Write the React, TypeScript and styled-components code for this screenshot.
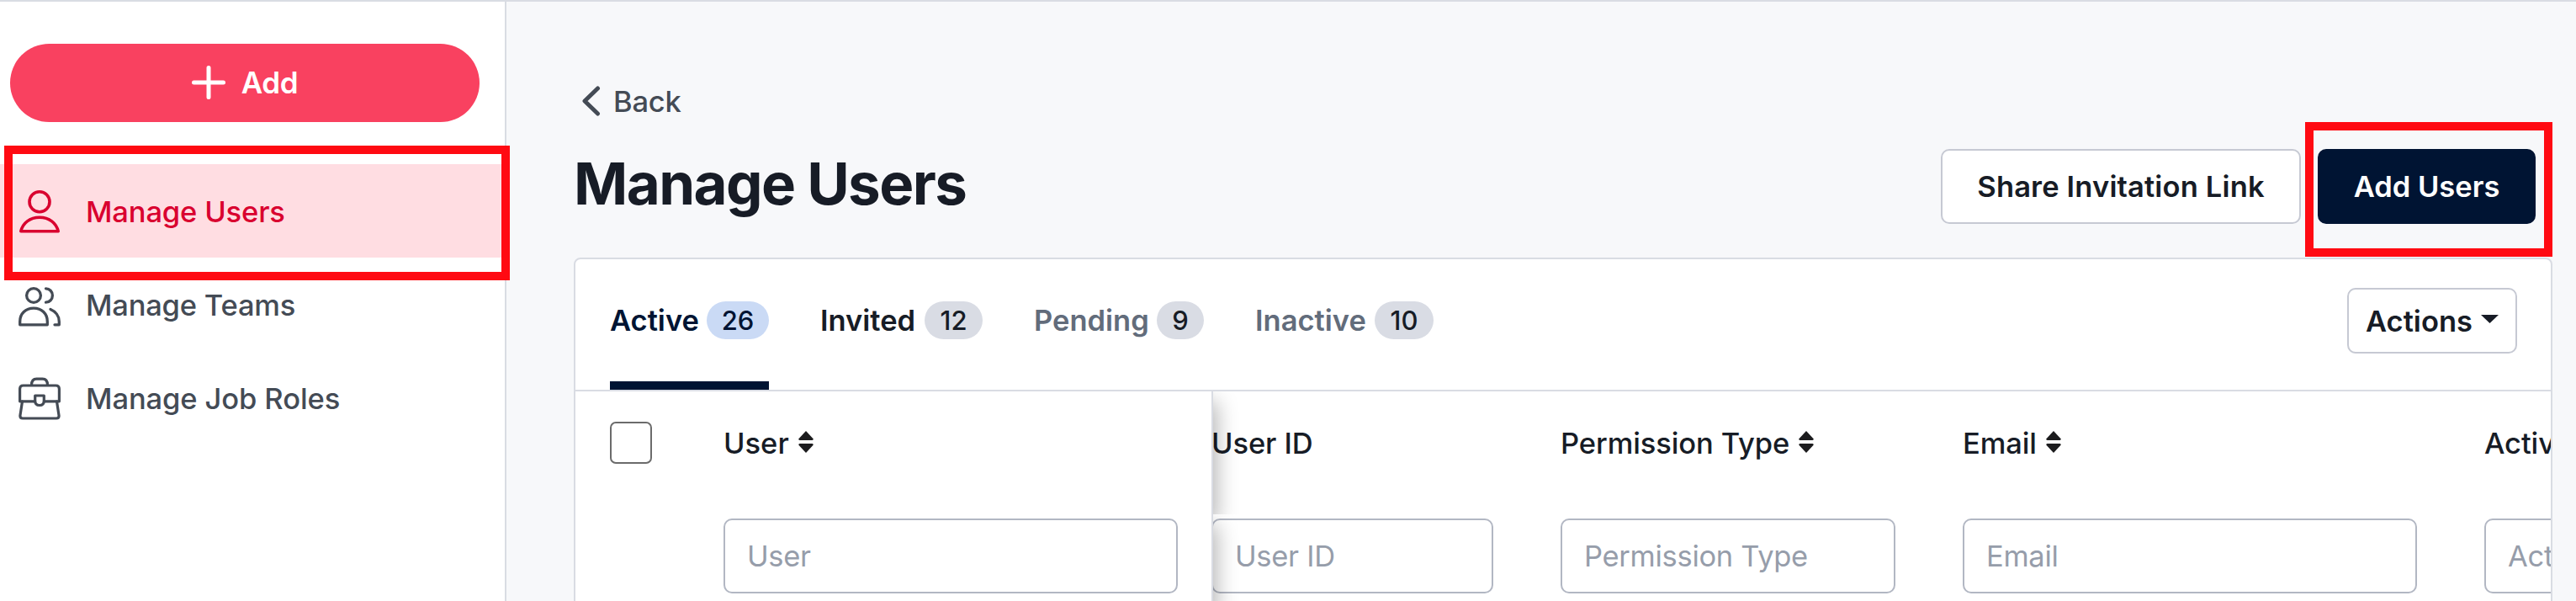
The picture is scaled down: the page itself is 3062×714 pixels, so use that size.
import React from "react";
import styled, { createGlobalStyle, css } from "styled-components";

const Global = createGlobalStyle`
  * { box-sizing: border-box; }
  html, body { margin: 0; padding: 0; }
  body {
    width: 3062px; height: 714px; overflow: hidden; background: #f7f8fa;
    font-family: Inter, "Liberation Sans", sans-serif; color: #171c26;
  }
  button, input { font: inherit; }
`;

const Label = styled.span<{ $ls?: number }>`
  white-space: nowrap;
  letter-spacing: ${(p) => p.$ls ?? 0}px;
`;

const Shell = styled.div`
  display: flex; width: 3062px; height: 714px; overflow: hidden;
  border-top: 2px solid #d9dce3; position: relative;
`;
const Sidebar = styled.aside`
  width: 602px; flex: none; background: #fff; border-right: 2px solid #d9dce3;
  padding-top: 50px;
`;
const AddButton = styled.button`
  display: flex; align-items: center; justify-content: center; gap: 19px;
  width: 558px; height: 93px; margin: 0 0 50px 12px; padding: 0 0 2px 0;
  border: 0; border-radius: 47px; background: #f94160; color: #fff;
  font-size: 35px; font-weight: 600;
`;
const NavItem = styled.a<{ $active?: boolean }>`
  display: flex; align-items: center; gap: 28px; height: 111px; padding-left: 20px;
  font-size: 34.5px; font-weight: 550; color: #444b55;
  ${(p) => p.$active && css`background: #ffdde2; color: #d9002f;`}
  svg { flex: none; }
  span { padding-top: 1px; }
`;
const Highlight = styled.div<{ $x: number; $y: number; $w: number; $h: number }>`
  position: absolute; left: ${(p) => p.$x}px; top: ${(p) => p.$y}px;
  width: ${(p) => p.$w}px; height: ${(p) => p.$h}px;
  border: 10px solid #ff0a12; z-index: 5;
`;
const Main = styled.main`
  flex: none; width: 2460px; padding: 93px 28px 0 80px;
`;
const Back = styled.a`
  display: flex; align-items: center; gap: 15px; height: 50px; padding-left: 9px;
  font-size: 34.5px; font-weight: 550; color: #444b55;
`;
const TitleRow = styled.header`
  display: flex; align-items: flex-start; justify-content: space-between;
  height: 161px; padding: 32px 20px 0 0;
`;
const Title = styled.h1`
  margin: -3px 0 0 0; font-size: 69px; line-height: 89px; font-weight: 700;
`;
const Buttons = styled.div`display: flex; gap: 20px;`;
const Button = styled.button<{ $dark?: boolean; $w: number }>`
  width: ${(p) => p.$w}px; height: 89px; padding: 0; border-radius: 10px;
  border: 2px solid ${(p) => (p.$dark ? "#001433" : "#c6c9d3")};
  background: ${(p) => (p.$dark ? "#001433" : "#fff")};
  color: ${(p) => (p.$dark ? "#fff" : "#171c26")};
  font-size: 34.5px; font-weight: 600;
`;
const Card = styled.section`
  width: 2352px; height: 420px; background: #fff; border: 2px solid #d9dce3;
  border-radius: 8px; overflow: hidden;
`;
const TabBar = styled.div`
  display: flex; justify-content: space-between; height: 157px;
  padding: 0 40px 0 41px; border-bottom: 2px solid #d9dce3;
`;
const Tabs = styled.div`display: flex; gap: 61px;`;
const Tab = styled.div<{ $tone: string; $active?: boolean; $w: number }>`
  display: flex; align-items: center; justify-content: space-between;
  width: ${(p) => p.$w}px; height: 155px;
  color: ${(p) => p.$tone}; font-size: 34.5px; font-weight: 600;
  border-bottom: 10px solid ${(p) => (p.$active ? "#001433" : "transparent")};
`;
const Count = styled.span<{ $active?: boolean; $w: number }>`
  display: flex; align-items: center; justify-content: center;
  width: ${(p) => p.$w}px; height: 45px; border-radius: 23px;
  font-size: 31px; font-weight: 550;
  background: ${(p) => (p.$active ? "#cadaf5" : "#d9dce4")};
  color: ${(p) => (p.$active ? "#001433" : "#171c26")};
`;
const ActionsButton = styled.button`
  display: flex; align-items: center; justify-content: center; gap: 10px;
  width: 202px; height: 78px; margin-top: 34px; padding: 0;
  border: 2px solid #c6c9d3; border-radius: 10px; background: #fff; color: #171c26;
  font-size: 34.5px; font-weight: 600;
  svg { margin-top: -4px; }
`;
const Table = styled.div`
  display: grid;
  grid-template-columns: 758px 373px 478px 620px 400px;
  grid-template-rows: 146px 110px;
`;
const Cell = styled.div<{ $filter?: boolean; $flush?: boolean }>`
  display: flex; align-items: flex-start; gap: 11px;
  padding: ${(p) => (p.$filter ? "5px" : "40px")} 0 0 ${(p) => (p.$flush ? "0" : "40px")};
  margin-left: ${(p) => (p.$flush ? "-2px" : "0")};
  font-size: 34.5px; font-weight: 550; line-height: 44px;
`;
const PinnedCell = styled(Cell)`
  position: relative; z-index: 1; background: #fff; padding-left: 41px;
  border-right: 2px solid #d9dce3;
  clip-path: inset(0 -40px 0 0);
  box-shadow: 4px 12px 24px rgba(0, 0, 0, 0.3);
`;
const Check = styled.span<{ $blank?: boolean }>`
  flex: none; width: 50px; height: 50px; margin: -4px 74px 0 0; border-radius: 7px;
  ${(p) => !p.$blank && css`border: 2px solid #6b6b6b;`}
`;
const SortSvg = styled.svg`flex: none; margin-top: 7px;`;
const Input = styled.input<{ $w: number }>`
  flex: none; width: ${(p) => p.$w}px; height: 89px; padding: 0 26px;
  border: 2px solid #b2b7c3; border-radius: 10px; background: #fff;
  font-size: 34.5px; font-weight: 400; letter-spacing: -0.3px;
  &::placeholder { color: #969daa; opacity: 1; }
`;

const Sort = () => (
  <SortSvg width="18" height="26" viewBox="0 0 18 26" fill="#1c1c1e">
    <path d="M9 0 17.6 9.2Q18 11 16.5 11H1.5Q0 11 .4 9.2Z" />
    <path d="M9 26 17.6 16.8Q18 15 16.5 15H1.5Q0 15 .4 16.8Z" />
  </SortSvg>
);
const UserIcon = () => (
  <svg width="54" height="54" viewBox="0 0 54 54" fill="none" stroke="currentColor" strokeWidth="3.6" strokeLinejoin="round">
    <circle cx="27" cy="15.800" r="12" />
    <path d="M4.800 50.700C7 41 15.500 34.200 27 34.200S47 41 49.200 50.700Z" />
  </svg>
);
const TeamIcon = () => (
  <svg width="54" height="54" viewBox="0 0 54 54" fill="none" stroke="currentColor" strokeWidth="3.300" strokeLinejoin="round" strokeLinecap="round">
    <circle cx="20" cy="16" r="8.400" />
    <path d="M3.700 50.800V47C3.700 37.500 10.500 31.200 20 31.200S36.300 37.500 36.300 47v3.800Z" />
    <path d="M34.500 7.800c4.500 0 7.900 3.800 7.900 8.200s-3.400 8.200-7.900 8.200M40 32.500c6 2.500 10.300 8 10.300 14.500v3.800H45" />
  </svg>
);
const CaseIcon = () => (
  <svg width="54" height="54" viewBox="0 0 54 54" fill="none" stroke="currentColor" strokeWidth="3.200" strokeLinejoin="round" strokeLinecap="round">
    <path d="M17.500 11.500q0-7.400 6-7.400h7q6 0 6 7.400" />
    <path d="M21.700 30.800H3.600V16q0-4 4-4h38.800q4 0 4 4v14.800H32.300" />
    <path d="M21.700 24h10.600v6.500q0 5-5.300 5t-5.300-5ZM6.500 31 3.900 48q0 3 3 3h40.200q3 0 3-3L47.500 31" />
  </svg>
);

const tabs = [
  { label: "Active", count: 26, tone: "#001433", w: 189, pill: 74, active: true },
  { label: "Invited", count: 12, tone: "#171c26", w: 193, pill: 69 },
  { label: "Pending", count: 9, tone: "#626c7b", w: 202, pill: 56 },
  { label: "Inactive", count: 10, tone: "#626c7b", w: 212, pill: 70 },
];
const columns = [
  { label: "User ID", w: 335, flush: true },
  { label: "Permission Type", w: 398, sort: true },
  { label: "Email", w: 540, sort: true },
  { label: "Active Status", w: 340 },
];

export default function App() {
  return (
    <>
      <Global />
      <Shell>
        <Sidebar>
          <AddButton>
            <svg width="40" height="40" viewBox="0 0 40 40" stroke="#fff" strokeWidth="5" strokeLinecap="round">
              <path d="M20 2.500v35M2.500 20h35" />
            </svg>
            <Label $ls={-0.3}>Add</Label>
          </AddButton>
          <NavItem $active><UserIcon /><Label $ls={-0.15}>Manage Users</Label></NavItem>
          <NavItem><TeamIcon /><Label $ls={-0.2}>Manage Teams</Label></NavItem>
          <NavItem><CaseIcon /><Label $ls={-0.1}>Manage Job Roles</Label></NavItem>
        </Sidebar>
        <Main>
          <Back>
            <svg width="23" height="36" viewBox="0 0 23 36" fill="none" stroke="currentColor" strokeWidth="5" strokeLinecap="round" strokeLinejoin="round">
              <path d="M19.500 3 4 18l15.500 15" />
            </svg>
            <Label $ls={-0.2}>Back</Label>
          </Back>
          <TitleRow>
            <Title><Label $ls={-1.6}>Manage Users</Label></Title>
            <Buttons>
              <Button $w={428}><Label $ls={0.15}>Share Invitation Link</Label></Button>
              <Button $w={259} $dark><Label>Add Users</Label></Button>
            </Buttons>
          </TitleRow>
          <Card>
            <TabBar>
              <Tabs>
                {tabs.map((t) => (
                  <Tab key={t.label} $tone={t.tone} $active={t.active} $w={t.w}>
                    <Label>{t.label}</Label>
                    <Count $active={t.active} $w={t.pill}>{t.count}</Count>
                  </Tab>
                ))}
              </Tabs>
              <ActionsButton>
                <Label>Actions</Label>
                <svg width="21" height="10" viewBox="0 0 21 10"><path d="M0 0h21L10.500 10Z" fill="#171c26" /></svg>
              </ActionsButton>
            </TabBar>
            <Table>
              <PinnedCell><Check /><Label>User</Label><Sort /></PinnedCell>
              {columns.map((c) => (
                <Cell key={c.label} $flush={c.flush}><Label $ls={-0.1}>{c.label}</Label>{c.sort && <Sort />}</Cell>
              ))}
              <PinnedCell $filter><Check $blank /><Input $w={540} placeholder="User" /></PinnedCell>
              {columns.map((c) => (
                <Cell key={c.label} $filter $flush={c.flush}><Input $w={c.w} placeholder={c.label} /></Cell>
              ))}
            </Table>
          </Card>
        </Main>
        <Highlight $x={5} $y={171} $w={601} $h={160} />
        <Highlight $x={2740} $y={143} $w={294} $h={160} />
      </Shell>
    </>
  );
}
